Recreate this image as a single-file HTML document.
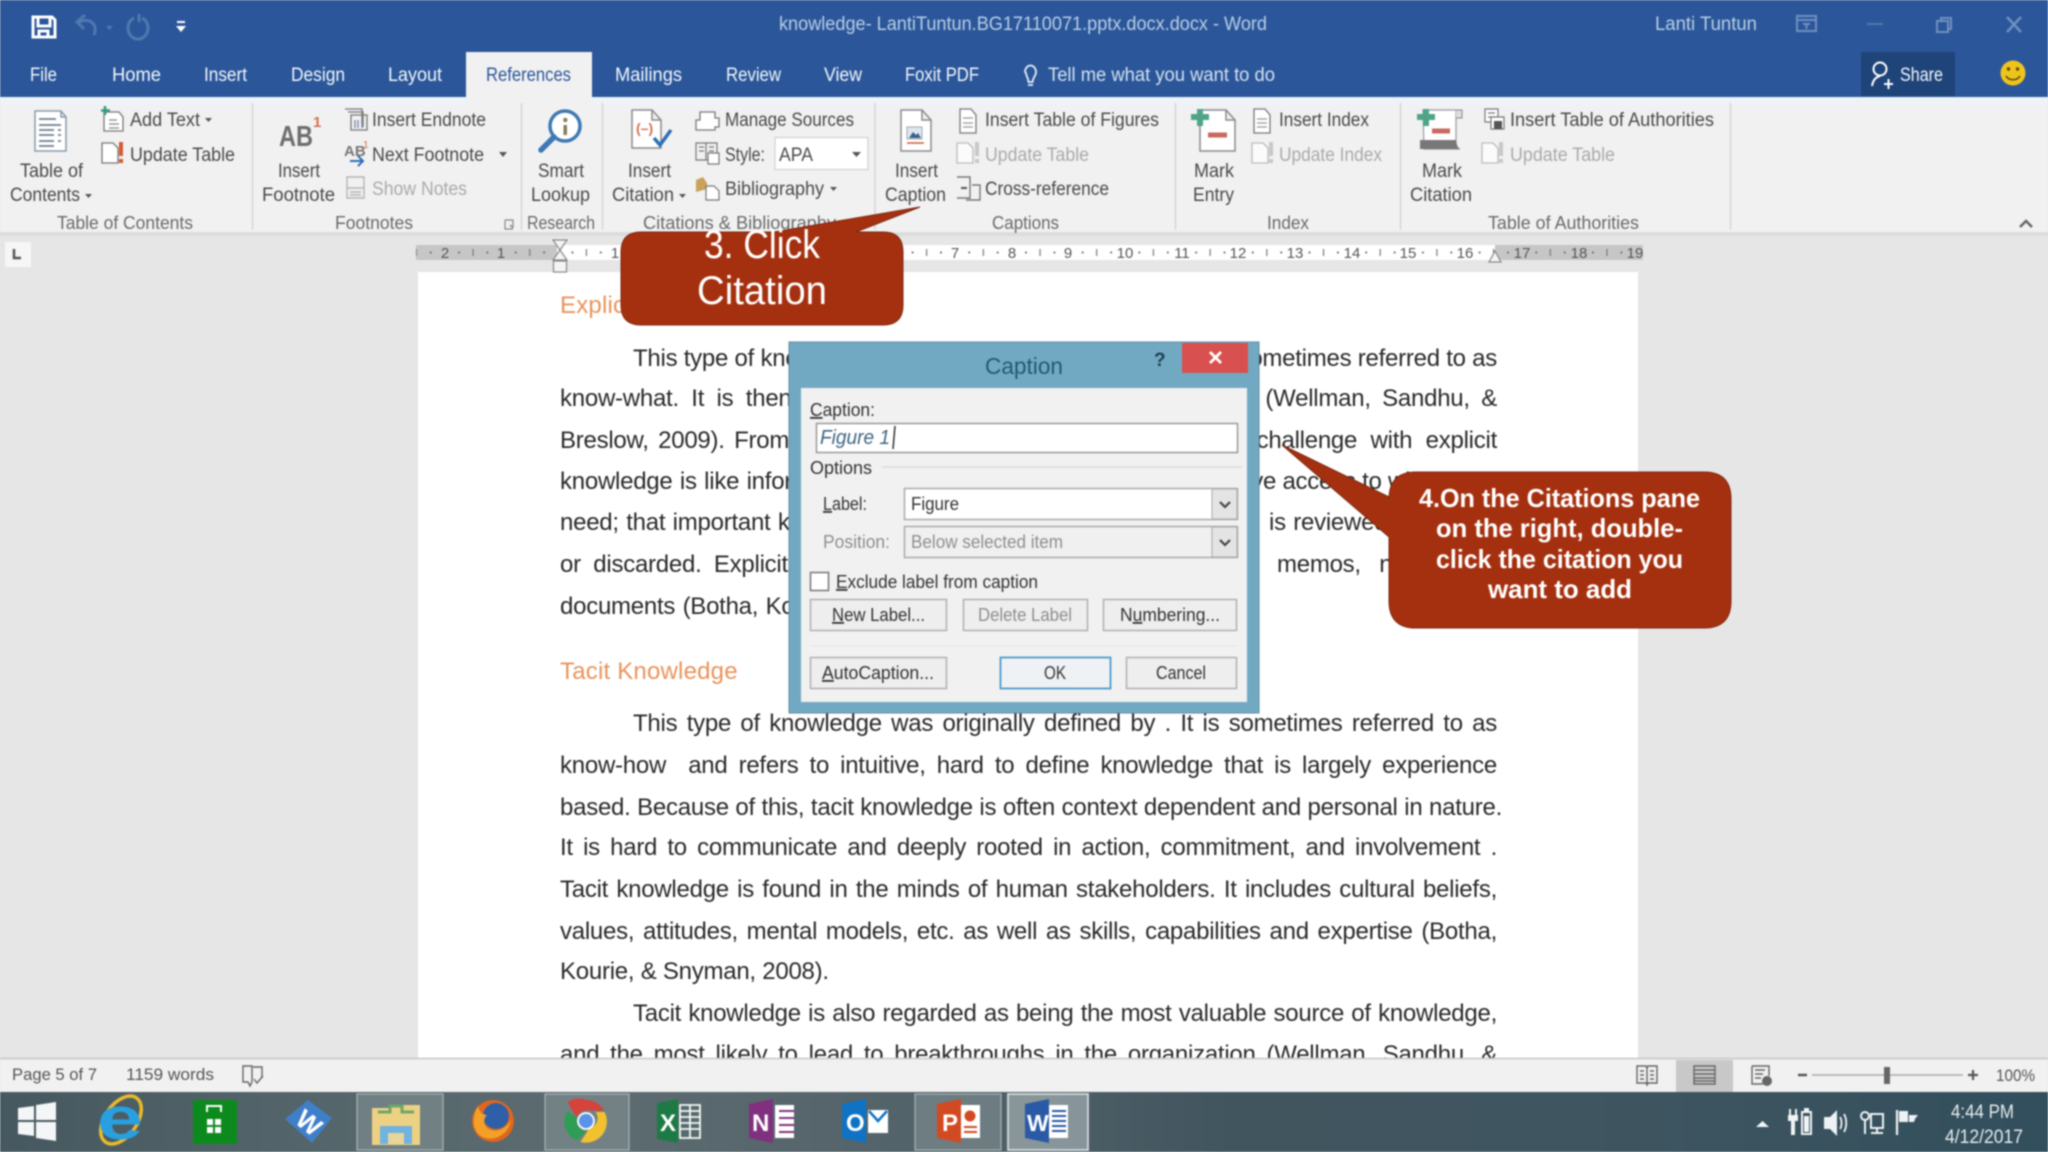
<!DOCTYPE html>
<html><head><meta charset="utf-8"><title>Word</title>
<style>
html,body{margin:0;padding:0;background:#e6e6e6;}
#r{position:relative;width:2048px;height:1152px;overflow:hidden;background:#e6e6e6;font-family:"Liberation Sans",sans-serif;filter:blur(.7px);}
#page{position:absolute;left:418px;top:272px;width:1220px;height:800px;background:#fff;}
#doc{position:absolute;left:0;top:2px;width:2048px;height:1150px;}
.l{position:absolute;left:560px;width:937px;height:30px;line-height:30px;font-size:24px;letter-spacing:-.25px;color:#2a2a2a;white-space:nowrap;text-align:justify;text-align-last:justify;}
.p{position:absolute;height:30px;line-height:30px;font-size:24px;letter-spacing:-.25px;color:#2a2a2a;white-space:nowrap;}
.h{position:absolute;left:560px;height:30px;line-height:30px;font-size:24px;letter-spacing:.2px;color:#e8935c;white-space:nowrap;}
svg{position:absolute;left:0;top:0;}
text{font-family:"Liberation Sans",sans-serif;}
.t{font-size:19px;fill:#4a4a4a;}
.d{font-size:19px;fill:#aaa;}
.g{font-size:18px;fill:#6a6a6a;}
.w{font-size:19px;fill:#f2f6fb;}
.f{font-size:19px;fill:#b8cde6;}
.u{text-decoration:underline;}
.dl{font-size:18px;fill:#333;}
.dd{font-size:18px;fill:#8e8e8e;}
.b{fill:#eee;stroke:#b0b0b0;stroke-width:1.5;}
.ct{font-size:26px;font-weight:bold;fill:#fff;}
.rn{font-size:15px;fill:#555;}
</style></head><body><div id="r">
<div id="page"></div>
<div id="doc">
<div class="h" style="top:289px;">Explicit Knowledge</div>
<div class="p" style="left:633px;top:342px;">This type of knowledge</div>
<div class="p" style="left:560px;top:382px;word-spacing:6px;">know-what. It is then</div>
<div class="p" style="left:560px;top:424px;word-spacing:3px;">Breslow, 2009). From</div>
<div class="p" style="left:560px;top:465px;word-spacing:1px;">knowledge is like information</div>
<div class="p" style="left:560px;top:506px;word-spacing:1px;">need; that important knowledge</div>
<div class="p" style="left:560px;top:548px;word-spacing:6px;">or discarded. Explicit</div>
<div class="p" style="left:560px;top:590px;word-spacing:1px;">documents (Botha, Kourie</div>
<div class="p" style="right:551px;top:342px;">sometimes referred to as</div>
<div class="p" style="right:551px;top:382px;word-spacing:5px;">(Wellman, Sandhu, &amp;</div>
<div class="p" style="right:551px;top:424px;word-spacing:7px;">challenge with explicit</div>
<div class="p" style="left:1225px;top:465px;">have access to what</div>
<div class="p" style="left:1269px;top:506px;word-spacing:1px;">is reviewed</div>
<div class="p" style="left:1277px;top:548px;word-spacing:12px;">memos, notes</div>
<div class="h" style="top:655px;">Tacit Knowledge</div>
<div class="l" style="left:633px;width:864px;top:707px;">This type of knowledge was originally defined by . It is sometimes referred to as</div>
<div class="l" style="top:749px;">know-how &nbsp;and refers to intuitive, hard to define knowledge that is largely experience</div>
<div class="l" style="top:791px;width:942px;">based. Because of this, tacit knowledge is often context dependent and personal in nature.</div>
<div class="l" style="top:831px;">It is hard to communicate and deeply rooted in action, commitment, and involvement .</div>
<div class="l" style="top:873px;">Tacit knowledge is found in the minds of human stakeholders. It includes cultural beliefs,</div>
<div class="l" style="top:915px;">values, attitudes, mental models, etc. as well as skills, capabilities and expertise (Botha,</div>
<div class="p" style="left:560px;top:955px;">Kourie, &amp; Snyman, 2008).</div>
<div class="l" style="left:633px;width:864px;top:997px;">Tacit knowledge is also regarded as being the most valuable source of knowledge,</div>
<div class="l" style="top:1038px;">and the most likely to lead to breakthroughs in the organization (Wellman, Sandhu, &amp;</div>
</div>

<svg width="2048" height="1152" viewBox="0 0 2048 1152" xmlns="http://www.w3.org/2000/svg">
<defs>
<pattern id="tk" x="558" y="245" width="56.7" height="15" patternUnits="userSpaceOnUse">
<rect x="13.6" y="6.5" width="1.6" height="2" fill="#666"/><rect x="27.8" y="4" width="1.2" height="7" fill="#777"/><rect x="42" y="6.5" width="1.6" height="2" fill="#666"/>
</pattern>
<linearGradient id="tb" x1="0" x2="1" y1="0" y2="0">
<stop offset="0" stop-color="#46585f"/><stop offset=".18" stop-color="#56676c"/><stop offset=".3" stop-color="#5c6b70"/><stop offset=".5" stop-color="#4e5f66"/><stop offset=".6" stop-color="#41555f"/><stop offset=".8" stop-color="#3e5560"/><stop offset="1" stop-color="#324e5c"/>
</linearGradient>
</defs>

<!-- title + tabs -->
<rect x="0" y="0" width="2048" height="97" fill="#2b579a"/>
<path d="M33 17h19l3 3v17H33zM38 17v9h12v-9M39 37v-6h9v6" fill="none" stroke="#fff" stroke-width="3"/>
<path d="M94 35c4-10-3-18-15-13M85 15l-8 7 7 7" fill="none" stroke="#4f78b0" stroke-width="3"/>
<path d="M106 26l3.500 4 3.500-4z" fill="#4f78b0"/>
<path d="M142 18a10 11 0 1 1-8 0M139 14v8" fill="none" stroke="#4f78b0" stroke-width="3"/>
<path d="M177 21h8v2h-8zM176 26h10l-5 6z" fill="#fff"/>
<text x="779" y="30" class="f" textLength="488" lengthAdjust="spacingAndGlyphs">knowledge- LantiTuntun.BG17110071.pptx.docx.docx  -  Word</text>
<text x="1655" y="30" class="f" textLength="102" lengthAdjust="spacingAndGlyphs">Lanti Tuntun</text>
<path d="M1797 16h19v15h-19zM1797 20h19M1803 24h7M1806.500 24v5" fill="none" stroke="#6f90c0" stroke-width="2"/>
<path d="M1867 24h16" stroke="#4f78b0" stroke-width="2"/>
<path d="M1937 21h11v11h-11zM1941 21v-3h10v11h-3" fill="none" stroke="#6f90c0" stroke-width="2"/>
<path d="M2007 17l14 15M2021 17l-14 15" stroke="#6f90c0" stroke-width="2.500"/>

<text x="30" y="81" class="w" textLength="27" lengthAdjust="spacingAndGlyphs">File</text>
<text x="112" y="81" class="w" textLength="49" lengthAdjust="spacingAndGlyphs">Home</text>
<text x="204" y="81" class="w" textLength="43" lengthAdjust="spacingAndGlyphs">Insert</text>
<text x="291" y="81" class="w" textLength="54" lengthAdjust="spacingAndGlyphs">Design</text>
<text x="388" y="81" class="w" textLength="54" lengthAdjust="spacingAndGlyphs">Layout</text>
<rect x="466" y="52" width="126" height="46" fill="#f1f1f1"/>
<text x="486" y="81" style="font-size:19px;fill:#2b579a" textLength="85" lengthAdjust="spacingAndGlyphs">References</text>
<text x="615" y="81" class="w" textLength="67" lengthAdjust="spacingAndGlyphs">Mailings</text>
<text x="726" y="81" class="w" textLength="55" lengthAdjust="spacingAndGlyphs">Review</text>
<text x="824" y="81" class="w" textLength="38" lengthAdjust="spacingAndGlyphs">View</text>
<text x="905" y="81" class="w" textLength="74" lengthAdjust="spacingAndGlyphs">Foxit PDF</text>
<path d="M1026 73a5.500 6.500 0 0 0-1 -1a5.500 6.500 0 0 1 11 0c0 4-3 5-3.500 10h-4c-.5-5-2.500-6-2.500-9zM1028 85h5" fill="none" stroke="#e4edf7" stroke-width="1.800"/>
<text x="1048" y="81" class="w" style="fill:#d3e0f0" textLength="227" lengthAdjust="spacingAndGlyphs">Tell me what you want to do</text>
<rect x="1861" y="52" width="94" height="44" fill="#1e4479"/>
<circle cx="1880" cy="69" r="6.500" fill="none" stroke="#fff" stroke-width="2"/>
<path d="M1872 86c1-6 4-9 8-10M1884 84h9M1888.500 79v10" fill="none" stroke="#fff" stroke-width="2"/>
<text x="1900" y="81" class="w" textLength="43" lengthAdjust="spacingAndGlyphs">Share</text>
<circle cx="2013" cy="73" r="12.500" fill="#eec41c"/><circle cx="2008.500" cy="69" r="1.700" fill="#5a4a10"/><circle cx="2017.500" cy="69" r="1.700" fill="#5a4a10"/><path d="M2006 76c3 5 11 5 14 0" fill="none" stroke="#5a4a10" stroke-width="1.600"/>

<!-- ribbon -->
<rect x="0" y="97" width="2048" height="138" fill="#f1f1f1"/>
<rect x="0" y="97" width="466" height="9" fill="#eef3f8"/><rect x="592" y="97" width="1456" height="9" fill="#eef3f8"/>
<rect x="0" y="232" width="2048" height="4" fill="#dcdcdc"/>
<g stroke="#d6d6d6" stroke-width="1.500">
<path d="M252.500 103V230M521.500 103V230M602.500 103V230M875 103V230M1175.500 103V230M1400.500 103V230M1730.500 103V230"/>
</g>

<!-- TOC -->
<path d="M35 111h26l5 6v34H35zM61 111v6h5" fill="#fff" stroke="#8a9aa8" stroke-width="1.500"/>
<path d="M39 119h17M39 125h22M39 130h15M39 135h15M39 141h15M39 146h15" stroke="#6d7f90" stroke-width="1.800"/>
<path d="M58 130h3M58 135h3M58 141h3" stroke="#6d7f90" stroke-width="1.800"/>
<text x="20" y="177" class="t" textLength="63" lengthAdjust="spacingAndGlyphs">Table of</text>
<text x="10" y="201" class="t" textLength="70" lengthAdjust="spacingAndGlyphs">Contents</text>
<path d="M85 194h7l-3.500 4z" fill="#555"/>
<path d="M104 112h15l4 5v14h-19z" fill="#fff" stroke="#777" stroke-width="1.300"/><path d="M109 120h8M109 124h10M109 128h10" stroke="#888" stroke-width="1.300"/>
<path d="M105 106v9M101 110.500h9" stroke="#3b9a7a" stroke-width="2.600"/>
<text x="130" y="126" class="t" textLength="70" lengthAdjust="spacingAndGlyphs">Add Text</text>
<path d="M205 118h7l-3.500 4z" fill="#555"/>
<path d="M102 143h11l5 5v15h-16z" fill="#fff" stroke="#777" stroke-width="1.300"/><rect x="119" y="142" width="4" height="14" fill="#d65a32"/><rect x="119" y="159" width="4" height="4" fill="#d65a32"/>
<text x="130" y="161" class="t" textLength="105" lengthAdjust="spacingAndGlyphs">Update Table</text>
<text x="57" y="229" class="g" textLength="136" lengthAdjust="spacingAndGlyphs">Table of Contents</text>

<!-- Footnotes -->
<text x="279" y="146" style="font-size:29px;font-weight:bold;fill:#6e6e6e" textLength="34" lengthAdjust="spacingAndGlyphs">AB</text>
<text x="313" y="127" style="font-size:15px;font-weight:bold;fill:#d3704c">1</text>
<text x="278" y="177" class="t" textLength="42" lengthAdjust="spacingAndGlyphs">Insert</text>
<text x="262" y="201" class="t" textLength="73" lengthAdjust="spacingAndGlyphs">Footnote</text>
<path d="M345 109h17v14M348 112h15v15M351 115h16v15h-16z" fill="none" stroke="#777" stroke-width="1.300"/>
<path d="M355 120v8M358 120v8M362 120v8" stroke="#6a7fa0" stroke-width="1.200"/>
<text x="372" y="126" class="t" textLength="114" lengthAdjust="spacingAndGlyphs">Insert Endnote</text>
<text x="344" y="156" style="font-size:15px;font-weight:bold;fill:#777">AB</text><text x="363" y="148" style="font-size:10px;fill:#d3704c">1</text>
<path d="M350 161h13M358 156l5 5-5 5" fill="none" stroke="#2f6fb5" stroke-width="2"/>
<text x="372" y="161" class="t" textLength="112" lengthAdjust="spacingAndGlyphs">Next Footnote</text>
<path d="M499 152h8l-4 5z" fill="#555"/>
<path d="M347 177h17v21h-17zM347 188h17M350 192h11M350 195h11" fill="none" stroke="#b5b5b5" stroke-width="1.400"/>
<text x="372" y="195" class="d" textLength="95" lengthAdjust="spacingAndGlyphs">Show Notes</text>
<text x="335" y="229" class="g" textLength="78" lengthAdjust="spacingAndGlyphs">Footnotes</text>
<path d="M505 220h8v8M505 220v9h8" fill="none" stroke="#888" stroke-width="1.200"/><path d="M510 225l3 3" stroke="#888" stroke-width="1.500"/>

<!-- Research -->
<circle cx="565" cy="126" r="15" fill="#fff" stroke="#3e79b3" stroke-width="3.500"/>
<path d="M554 137l-13 13" stroke="#3e79b3" stroke-width="5.500" stroke-linecap="round"/>
<rect x="563.500" y="125" width="3.500" height="10" fill="#8b7a5a"/><circle cx="565.300" cy="120" r="2.200" fill="#8b7a5a"/>
<text x="538" y="177" class="t" textLength="46" lengthAdjust="spacingAndGlyphs">Smart</text>
<text x="531" y="201" class="t" textLength="59" lengthAdjust="spacingAndGlyphs">Lookup</text>
<text x="527" y="229" class="g" textLength="68" lengthAdjust="spacingAndGlyphs">Research</text>

<!-- Citations -->
<path d="M632 110h20l9 10v28h-29zM652 110v10h9" fill="#fff" stroke="#8a8a8a" stroke-width="1.500"/>
<text x="636" y="133" style="font-size:14px;font-weight:bold;fill:#d3704c">(–)</text>
<path d="M654 138l6 7 11-15" fill="none" stroke="#2f6fb5" stroke-width="3.500"/>
<text x="628" y="177" class="t" textLength="43" lengthAdjust="spacingAndGlyphs">Insert</text>
<text x="612" y="201" class="t" textLength="62" lengthAdjust="spacingAndGlyphs">Citation</text>
<path d="M679 194h7l-3.500 4z" fill="#555"/>
<path d="M700 112h15v6h4v9h-4v3h-19v-10h4z" fill="#fff" stroke="#777" stroke-width="1.300"/>
<text x="725" y="126" class="t" textLength="129" lengthAdjust="spacingAndGlyphs">Manage Sources</text>
<path d="M696 143h21v17h-21zM706 143v17M699 147h5M699 151h5M709 147h5M709 151h5" fill="none" stroke="#777" stroke-width="1.200"/><path d="M708 153h11v11h-11z" fill="#fff" stroke="#777" stroke-width="1.200"/>
<text x="725" y="161" class="t" textLength="40" lengthAdjust="spacingAndGlyphs">Style:</text>
<rect x="775" y="137.500" width="93" height="32" fill="#fff" stroke="#d0d0d0" stroke-width="1.200"/>
<text x="779" y="161" class="t" textLength="34" lengthAdjust="spacingAndGlyphs">APA</text>
<path d="M852 152h9l-4.500 5z" fill="#555"/>
<path d="M696 180l7-3 4 6v6l-11 3z" fill="#c9a25a"/><path d="M706 186h8l5 5v9h-13z" fill="#fff" stroke="#777" stroke-width="1.200"/>
<text x="725" y="195" class="t" textLength="99" lengthAdjust="spacingAndGlyphs">Bibliography</text>
<path d="M830 187h7l-3.500 4z" fill="#555"/>
<text x="643" y="229" class="g" textLength="193" lengthAdjust="spacingAndGlyphs">Citations &amp; Bibliography</text>

<!-- Captions -->
<path d="M901 110h21l9 10v31h-30zM922 110v10h9" fill="#fff" stroke="#8a8a8a" stroke-width="1.500"/>
<rect x="907" y="127" width="15" height="12" fill="#dfe6ee" stroke="#9aa9b8"/><path d="M909 138l4-6 3 3 2-2 3 5z" fill="#3a5f86"/>
<path d="M907 143h17" stroke="#d3704c" stroke-width="1.800"/>
<text x="895" y="177" class="t" textLength="43" lengthAdjust="spacingAndGlyphs">Insert</text>
<text x="885" y="201" class="t" textLength="61" lengthAdjust="spacingAndGlyphs">Caption</text>
<path d="M960 109h11l5 6v18h-16z" fill="#fff" stroke="#777" stroke-width="1.300"/><path d="M963 118h10M963 123h10M963 127h10" stroke="#999" stroke-width="1.300"/>
<text x="985" y="126" class="t" textLength="174" lengthAdjust="spacingAndGlyphs">Insert Table of Figures</text>
<path d="M957 143h11l5 5v15h-16z" fill="#fbfbfb" stroke="#bbb" stroke-width="1.300"/><rect x="975" y="142" width="4" height="14" fill="#c8c8c8"/><rect x="975" y="159" width="4" height="4" fill="#c8c8c8"/>
<text x="985" y="161" class="d" textLength="104" lengthAdjust="spacingAndGlyphs">Update Table</text>
<path d="M957 177h13v21h-13M972 185h8v15h-14" fill="none" stroke="#777" stroke-width="1.400"/><path d="M961 188h6" stroke="#555" stroke-width="2"/>
<text x="985" y="195" class="t" textLength="124" lengthAdjust="spacingAndGlyphs">Cross-reference</text>
<text x="992" y="229" class="g" textLength="67" lengthAdjust="spacingAndGlyphs">Captions</text>

<!-- Index -->
<path d="M1200 110h26l9 10v31h-35zM1226 110v10h9" fill="#fff" stroke="#8a8a8a" stroke-width="1.500"/>
<path d="M1200 109v17M1191 117h18" stroke="#4fa488" stroke-width="6"/>
<path d="M1208 135h19" stroke="#c86a60" stroke-width="5"/>
<text x="1194" y="177" class="t" textLength="40" lengthAdjust="spacingAndGlyphs">Mark</text>
<text x="1193" y="201" class="t" textLength="41" lengthAdjust="spacingAndGlyphs">Entry</text>
<path d="M1254 109h11l5 6v18h-16z" fill="#fff" stroke="#777" stroke-width="1.300"/><path d="M1257 119h10M1257 123h10M1257 127h10" stroke="#999" stroke-width="1.300"/>
<text x="1279" y="126" class="t" textLength="90" lengthAdjust="spacingAndGlyphs">Insert Index</text>
<path d="M1252 143h11l5 5v15h-16z" fill="#fbfbfb" stroke="#bbb" stroke-width="1.300"/><rect x="1269" y="142" width="4" height="14" fill="#c8c8c8"/><rect x="1269" y="159" width="4" height="4" fill="#c8c8c8"/>
<text x="1279" y="161" class="d" textLength="103" lengthAdjust="spacingAndGlyphs">Update Index</text>
<text x="1267" y="229" class="g" textLength="42" lengthAdjust="spacingAndGlyphs">Index</text>

<!-- TOA -->
<path d="M1423 110h33v32c0 6 4 7 4 7h-36z" fill="#fff" stroke="#999" stroke-width="1.200"/><path d="M1456 110h6v8h-6" fill="#ddd" stroke="#888"/>
<path d="M1420 140h36c0 5 3 9 3 9h-39z" fill="#777"/>
<path d="M1426 109v17M1417 117h18" stroke="#4fa488" stroke-width="6"/>
<path d="M1432 131h18" stroke="#c86a60" stroke-width="5"/>
<text x="1422" y="177" class="t" textLength="40" lengthAdjust="spacingAndGlyphs">Mark</text>
<text x="1410" y="201" class="t" textLength="62" lengthAdjust="spacingAndGlyphs">Citation</text>
<path d="M1485 109h13v13h-13zM1488 113h7M1488 117h7" fill="#fff" stroke="#777" stroke-width="1.200"/><path d="M1491 117h13v12h-13z" fill="#fff" stroke="#777" stroke-width="1.200"/><rect x="1494" y="121" width="8" height="8" fill="#555"/>
<text x="1510" y="126" class="t" textLength="204" lengthAdjust="spacingAndGlyphs">Insert Table of Authorities</text>
<path d="M1482 143h11l5 5v15h-16z" fill="#fbfbfb" stroke="#bbb" stroke-width="1.300"/><rect x="1499" y="142" width="4" height="14" fill="#c8c8c8"/><rect x="1499" y="159" width="4" height="4" fill="#c8c8c8"/>
<text x="1510" y="161" class="d" textLength="105" lengthAdjust="spacingAndGlyphs">Update Table</text>
<text x="1488" y="229" class="g" textLength="151" lengthAdjust="spacingAndGlyphs">Table of Authorities</text>
<path d="M2020 227l6-6 6 6" fill="none" stroke="#666" stroke-width="2.500"/>

<!-- Ruler band -->
<rect x="5" y="242" width="26" height="25" fill="#f6f6f6"/>
<path d="M14 249v9h7" fill="none" stroke="#555" stroke-width="2.500"/>
<rect x="416" y="245" width="141" height="15" fill="#c6c6c6"/>
<rect x="557" y="245" width="938" height="15" fill="#fff"/>
<rect x="1495" y="245" width="148" height="15" fill="#c6c6c6"/>
<rect x="416" y="245" width="1227" height="15" fill="url(#tk)"/>
<g text-anchor="middle">
<text x="445" y="258" class="rn">2</text><text x="501" y="258" class="rn">1</text><text x="615" y="258" class="rn">1</text>
<text x="955" y="258" class="rn">7</text><text x="1012" y="258" class="rn">8</text><text x="1068" y="258" class="rn">9</text><text x="1125" y="258" class="rn">10</text><text x="1182" y="258" class="rn">11</text><text x="1238" y="258" class="rn">12</text><text x="1295" y="258" class="rn">13</text><text x="1352" y="258" class="rn">14</text><text x="1408" y="258" class="rn">15</text><text x="1465" y="258" class="rn">16</text><text x="1522" y="258" class="rn">17</text><text x="1579" y="258" class="rn">18</text><text x="1635" y="258" class="rn">19</text>
</g>
<path d="M553 240h14l-7 10 7 10h-14l7-10z" fill="#f4f4f4" stroke="#888" stroke-width="1.200"/>
<rect x="553.500" y="261" width="13" height="11" fill="#f4f4f4" stroke="#888" stroke-width="1.200"/>
<path d="M1489 262l6-11 6 11z" fill="#f4f4f4" stroke="#888" stroke-width="1.200"/>

<!-- Callout 3 -->
<path d="M621 252q0-20 20-20h133l146-25-64 25h27q20 0 20 20v53q0 20-20 20H641q-20 0-20-20z" fill="#a5300f" stroke="#7d2610" stroke-width="1"/>
<text x="704" y="258" style="font-size:40px;fill:#fff" textLength="116" lengthAdjust="spacingAndGlyphs">3. Click</text>
<text x="697" y="304" style="font-size:40px;fill:#fff" textLength="130" lengthAdjust="spacingAndGlyphs">Citation</text>

<!-- Dialog -->
<rect x="789" y="342" width="470" height="371" fill="#72a9c2" stroke="#5e8ea6" stroke-width="1"/>
<rect x="801" y="388" width="446" height="314" fill="#f1f1f1"/>
<text x="985" y="374" style="font-size:23px;fill:#1f5a76" textLength="78" lengthAdjust="spacingAndGlyphs">Caption</text>
<text x="1154" y="366" style="font-size:19px;font-weight:bold;fill:#1f3f55">?</text>
<rect x="1182" y="343" width="66" height="30" fill="#d8504f"/>
<path d="M1210 352l11 11M1221 352l-11 11" stroke="#fff" stroke-width="2.800"/>
<text x="810" y="416" class="dl" textLength="65" lengthAdjust="spacingAndGlyphs"><tspan class="u">C</tspan>aption:</text>
<rect x="816.500" y="423.500" width="421" height="29" fill="#fff" stroke="#9a9a9a" stroke-width="1.500"/>
<text x="820" y="444" style="font-size:20px;font-style:italic;fill:#3f6582" textLength="70" lengthAdjust="spacingAndGlyphs">Figure 1</text>
<path d="M895 426l-2 23" stroke="#333" stroke-width="1.500"/>
<text x="810" y="474" class="dl" textLength="62" lengthAdjust="spacingAndGlyphs">Options</text>
<path d="M882 467h360" stroke="#dcdcdc" stroke-width="1.500"/>
<text x="823" y="510" class="dl" textLength="44" lengthAdjust="spacingAndGlyphs"><tspan class="u">L</tspan>abel:</text>
<rect x="904.500" y="488.500" width="333" height="31" fill="#fff" stroke="#aaa" stroke-width="1.500"/>
<text x="911" y="510" class="dl" textLength="48" lengthAdjust="spacingAndGlyphs">Figure</text>
<rect x="1212" y="489" width="25" height="30" fill="#e4e4e4" stroke="#aaa"/>
<path d="M1220 502l5 5 5-5" fill="none" stroke="#444" stroke-width="2.200"/>
<text x="823" y="548" class="dd" textLength="67" lengthAdjust="spacingAndGlyphs">Position:</text>
<rect x="904.500" y="526.500" width="333" height="31" fill="#f0f0f0" stroke="#aaa" stroke-width="1.500"/>
<text x="911" y="548" class="dd" textLength="152" lengthAdjust="spacingAndGlyphs">Below selected item</text>
<rect x="1212" y="527" width="25" height="30" fill="#e4e4e4" stroke="#aaa"/>
<path d="M1220 540l5 5 5-5" fill="none" stroke="#444" stroke-width="2.200"/>
<rect x="810.500" y="572.500" width="18" height="18" fill="#fff" stroke="#777" stroke-width="1.500"/>
<text x="836" y="588" class="dl" textLength="202" lengthAdjust="spacingAndGlyphs"><tspan class="u">E</tspan>xclude label from caption</text>
<rect x="810.500" y="599.500" width="136" height="31" class="b"/>
<text x="832" y="621" class="dl" textLength="93" lengthAdjust="spacingAndGlyphs"><tspan class="u">N</tspan>ew Label...</text>
<rect x="963.500" y="599.500" width="124" height="31" class="b"/>
<text x="978" y="621" class="dd" textLength="94" lengthAdjust="spacingAndGlyphs">Delete Label</text>
<rect x="1103.500" y="599.500" width="133" height="31" class="b"/>
<text x="1120" y="621" class="dl" textLength="100" lengthAdjust="spacingAndGlyphs">N<tspan class="u">u</tspan>mbering...</text>
<path d="M810 646h428" stroke="#e6e6e6" stroke-width="1"/>
<rect x="810.500" y="657.500" width="136" height="31" class="b"/>
<text x="822" y="679" class="dl" textLength="112" lengthAdjust="spacingAndGlyphs"><tspan class="u">A</tspan>utoCaption...</text>
<rect x="1000.500" y="657.500" width="110" height="31" fill="#eef2f5" stroke="#4f9ac9" stroke-width="1.800"/>
<text x="1044" y="679" class="dl" textLength="22" lengthAdjust="spacingAndGlyphs">OK</text>
<rect x="1126.500" y="657.500" width="110" height="31" class="b"/>
<text x="1156" y="679" class="dl" textLength="50" lengthAdjust="spacingAndGlyphs">Cancel</text>

<!-- Callout 4 -->
<path d="M1389 499q0-27 27-27h288q27 0 27 27v102q0 27-27 27h-288q-27 0-27-27v-64L1282 445l107 52z" fill="#a5300f" stroke="#7d2610" stroke-width="1"/>
<text x="1419" y="507" class="ct" textLength="281" lengthAdjust="spacingAndGlyphs">4.On the Citations pane</text>
<text x="1436" y="537" class="ct" textLength="247" lengthAdjust="spacingAndGlyphs">on the right, double-</text>
<text x="1436" y="568" class="ct" textLength="247" lengthAdjust="spacingAndGlyphs">click the citation you</text>
<text x="1488" y="598" class="ct" textLength="144" lengthAdjust="spacingAndGlyphs">want to add</text>

<!-- Status bar -->
<rect x="0" y="1058" width="2048" height="34" fill="#f1f1f1"/>
<path d="M0 1058.500h2048" stroke="#c6c6c6" stroke-width="1.500"/>
<text x="12" y="1080" style="font-size:17px;fill:#555" textLength="85" lengthAdjust="spacingAndGlyphs">Page 5 of 7</text>
<text x="126" y="1080" style="font-size:17px;fill:#555" textLength="88" lengthAdjust="spacingAndGlyphs">1159 words</text>
<path d="M243 1066h9v16l-2 4-2-4h-5zM253 1067h9v11" fill="none" stroke="#666" stroke-width="1.400"/><path d="M254 1079l3 4 6-7" fill="none" stroke="#666" stroke-width="1.400"/>
<path d="M1637 1066h9l1 2 1-2h9v17h-9l-1 2-1-2h-9zM1647 1068v15M1640 1071h4M1640 1075h4M1640 1079h4M1650 1071h4M1650 1075h4M1650 1079h4" fill="none" stroke="#666" stroke-width="1.400"/>
<rect x="1676" y="1060" width="57" height="32" fill="#c8c8c8"/>
<path d="M1694 1066h21v18h-21zM1694 1070h21M1694 1074h21M1694 1078h21M1694 1081h21" fill="none" stroke="#666" stroke-width="1.400"/>
<path d="M1752 1066h17v10M1752 1066v18h11M1755 1070h10M1755 1074h8M1755 1078h6" fill="none" stroke="#666" stroke-width="1.400"/><circle cx="1767" cy="1081" r="5" fill="#666"/>
<path d="M1798 1075h9" stroke="#555" stroke-width="2.500"/>
<path d="M1812 1075h151" stroke="#aaa" stroke-width="1.500"/>
<rect x="1884" y="1067" width="6" height="17" fill="#666"/>
<path d="M1968 1075h10M1973 1070v10" stroke="#555" stroke-width="2.200"/>
<text x="1996" y="1081" style="font-size:17px;fill:#555" textLength="39" lengthAdjust="spacingAndGlyphs">100%</text>

<!-- Taskbar -->
<rect x="0" y="1092" width="2048" height="60" fill="url(#tb)"/>
<rect x="357" y="1094" width="86" height="56" fill="#8a9799" fill-opacity=".5" stroke="#a9b3b5" stroke-width="1.200"/>
<rect x="545" y="1094" width="84" height="56" fill="#8a9799" fill-opacity=".5" stroke="#a9b3b5" stroke-width="1.200"/>
<rect x="915" y="1094" width="86" height="56" fill="#8a9799" fill-opacity=".5" stroke="#a9b3b5" stroke-width="1.200"/>
<rect x="1008" y="1094" width="80" height="56" fill="#a8b3b7" fill-opacity=".65" stroke="#d4dadd" stroke-width="1.800"/>
<path d="M18 1108l16-2v14H18zM36 1105l20-3v18H36zM18 1122h16v14l-16-2zM36 1122h20v19l-20-3z" fill="#f4f6f7"/>
<ellipse cx="121" cy="1120" rx="16" ry="27" transform="rotate(35 121 1120)" fill="none" stroke="#e8b92c" stroke-width="3.500"/>
<text x="97" y="1139" style="font-size:60px;font-weight:bold;fill:#28a0e0" textLength="46" lengthAdjust="spacingAndGlyphs">e</text>
<rect x="193" y="1100" width="44" height="44" fill="#0c8a1e"/>
<path d="M207 1112v-6h14v6" fill="none" stroke="#fff" stroke-width="2"/>
<path d="M207 1119h6v6h-6zM215 1119h6v6h-6zM207 1127h6v6h-6zM215 1127h6v6h-6z" fill="#fff"/>
<path d="M308 1100l24 18-20 25-27-24z" fill="#3f7fc9"/>
<text x="297" y="1131" style="font-size:26px;font-weight:bold;fill:#fff" transform="rotate(38 308 1122)">W</text>
<path d="M372 1108h18l3-3h27v40h-48z" fill="#ecd183"/>
<path d="M378 1112h12v-6h12v6h12" fill="none" stroke="#6ea56a" stroke-width="3"/>
<path d="M380 1126h32v18h-32z" fill="#6fb3de"/><path d="M388 1133h16v11h-16z" fill="#e7d59a"/>
<circle cx="493" cy="1121" r="21" fill="#e0661d"/>
<circle cx="496" cy="1116" r="13" fill="#2f5fa8"/>
<path d="M478 1106c-7 12-6 28 7 32 12 3 24-5 26-18-5 9-15 13-22 9-6-4-6-10-2-14-5 0-8-4-9-9z" fill="#f2a028"/>
<path d="M586 1100a21 21 0 0 1 18.200 10.500H586a10 10 0 0 0-9.500 7l-9-15.500a21 21 0 0 1 19-2z" fill="#d6433a"/>
<path d="M567 1111a21 21 0 0 0 10 29.500l9.500-9a10 10 0 0 1-9-13.500z" fill="#2f9d54"/>
<path d="M604.500 1112a21 21 0 0 1-24 30l9-14a10 10 0 0 0 6-16z" fill="#f2c22e"/>
<circle cx="586" cy="1121" r="8" fill="#5a94e8" stroke="#fff" stroke-width="1.800"/>
<path d="M657 1103l21-4v44l-21-4z" fill="#1d7a45"/>
<text x="660" y="1131" style="font-size:24px;font-weight:bold;fill:#fff">X</text>
<path d="M680 1105h20v33h-20zM680 1111h20M680 1117h20M680 1123h20M680 1129h20M690 1105v33" fill="none" stroke="#f2fbf5" stroke-width="1.800"/>
<path d="M749 1104l24-5v44l-24-5z" fill="#80307f"/>
<text x="752" y="1131" style="font-size:24px;font-weight:bold;fill:#fff">N</text>
<path d="M775 1105h19v33h-19z" fill="#fff"/><path d="M779 1111h15M779 1118h15M779 1125h15M779 1132h15" stroke="#80307f" stroke-width="2"/>
<path d="M842 1104l24-5v44l-24-5z" fill="#0f72c4"/>
<text x="846" y="1131" style="font-size:24px;font-weight:bold;fill:#fff">O</text>
<path d="M868 1110h20v23h-20z" fill="#fff"/><path d="M869 1111l9 10 9-10" fill="none" stroke="#0f72c4" stroke-width="2.500"/>
<path d="M937 1104l24-5v44l-24-5z" fill="#d24a22"/>
<text x="942" y="1131" style="font-size:24px;font-weight:bold;fill:#fff">P</text>
<path d="M961 1105h19v33h-19z" fill="#fff"/><circle cx="970" cy="1116" r="5.500" fill="#d24a22"/><path d="M964 1127h13M964 1132h13" stroke="#d24a22" stroke-width="2"/>
<path d="M1025 1104l24-5v44l-24-5z" fill="#2a5aa5"/>
<text x="1027" y="1131" style="font-size:23px;font-weight:bold;fill:#fff">W</text>
<path d="M1049 1105h19v33h-19z" fill="#fff"/><path d="M1052 1111h14M1052 1116h14M1052 1121h14M1052 1126h14M1052 1131h14" stroke="#2a5aa5" stroke-width="2"/>

<path d="M1756 1127l6.500-6 6.500 6z" fill="#f2f5f6"/>
<path d="M1796 1115v-6M1790 1115v-6" stroke="#f0f4f5" stroke-width="2"/><path d="M1788 1115h10v6h-3v14h-4v-14h-3z" fill="#f0f4f5"/>
<path d="M1802 1112h9v22h-9z" fill="none" stroke="#f0f4f5" stroke-width="2"/><rect x="1804" y="1108" width="5" height="3" fill="#f0f4f5"/><rect x="1804" y="1116" width="5" height="16" fill="#f0f4f5"/>
<path d="M1824 1117h6l7-7v26l-7-7h-6z" fill="#eef2f4"/><path d="M1840 1117c2 3 2 9 0 12M1844 1114c3 5 3 13 0 18" fill="none" stroke="#eef2f4" stroke-width="1.800"/>
<circle cx="1865" cy="1116" r="4" fill="none" stroke="#eef2f4" stroke-width="2"/><path d="M1865 1120v14" stroke="#eef2f4" stroke-width="2"/>
<path d="M1871 1114h12v14h-12zM1877 1128v5M1871 1133h12" fill="none" stroke="#eef2f4" stroke-width="2"/>
<path d="M1897 1110v25" stroke="#eef2f4" stroke-width="2.200"/><path d="M1899 1111h9v11h-9zM1909 1115h9l-3 4 0 0 -1 3h-5z" fill="#eef2f4"/>
<text x="1951" y="1118" style="font-size:19px;fill:#e4ecef" textLength="63" lengthAdjust="spacingAndGlyphs">4:44 PM</text>
<text x="1945" y="1143" style="font-size:19px;fill:#e4ecef" textLength="78" lengthAdjust="spacingAndGlyphs">4/12/2017</text>
</svg>
</div></body></html>
